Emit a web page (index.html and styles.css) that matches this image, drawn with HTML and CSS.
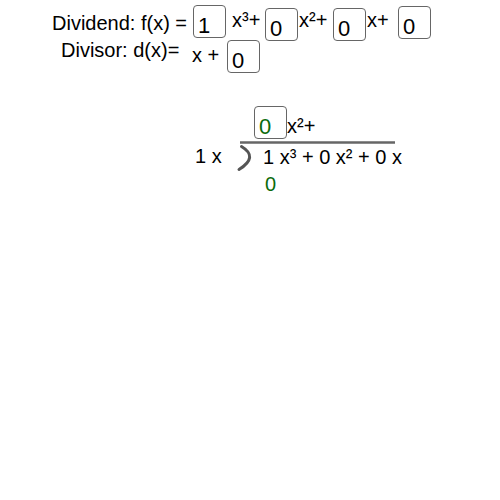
FILE: index.html
```html
<!DOCTYPE html>
<html lang="en">
  <head>
    <meta charset="UTF-8" />
    <meta name="viewport" content="width=device-width, initial-scale=1.0" />
    <title>Polynomial Division</title>
    <link rel="stylesheet" href="styles.css">
  </head>
  <body>
    <main class="applet">
      <!-- dividend row -->
      <span class="label dividend-label">Dividend: f(x) =</span>
      <input class="coef coef-a" type="text" value="1" aria-label="x cubed coefficient">
      <span class="label term-a">x³+</span>
      <input class="coef coef-b" type="text" value="0" aria-label="x squared coefficient">
      <span class="label term-b">x²+</span>
      <input class="coef coef-c" type="text" value="0" aria-label="x coefficient">
      <span class="label term-c">x+</span>
      <input class="coef coef-d" type="text" value="0" aria-label="constant">

      <!-- divisor row -->
      <span class="label divisor-label">Divisor: d(x)=</span>
      <span class="label divisor-x">x +</span>
      <input class="coef coef-r" type="text" value="0" aria-label="divisor constant">

      <!-- long division -->
      <input class="coef coef-q answer" type="text" value="0" aria-label="quotient x squared coefficient">
      <span class="label quot-term">x²+</span>
      <svg class="bracket" width="170" height="40" viewBox="230 135 170 40" aria-hidden="true">
        <line x1="240" y1="142.5" x2="395" y2="142.5" stroke="#666" stroke-width="2.5" />
        <path d="M241.5 146.5 Q259 157 239 169.5" fill="none" stroke="#555" stroke-width="3" stroke-linecap="round" />
      </svg>
      <span class="label divisor-term">1 x</span>
      <span class="label dividend-terms">1 x³ + 0 x² + 0 x</span>
      <span class="label answer product">0</span>
    </main>
  </body>
</html>
```

FILE: styles.css
```css
body {
  margin: 0;
  background: #fff;
}

.applet {
  position: relative;
  width: 500px;
  height: 500px;
  font-family: "Liberation Sans", Arial, sans-serif;
  font-size: 20px;
  line-height: 20px;
  color: #000;
}

/* top = baseline - 17 */
.label {
  position: absolute;
  white-space: nowrap;
}

.coef {
  position: absolute;
  box-sizing: border-box;
  width: 33px;
  height: 33px;
  margin: 0;
  padding: 8px 0 0 4px;
  border: 1.3px solid #666;
  border-radius: 4px;
  background: #fff;
  font-family: inherit;
  font-size: 22px;
  line-height: 22px;
  color: #000;
  outline: none;
}

.answer {
  color: #0b6b0b;
}

.dividend-label { left: 52px; top: 13px; }
.coef-a { left: 193px; top: 5px; }
.term-a { left: 232px; top: 10px; }
.coef-b { left: 265px; top: 8px; }
.term-b { left: 299px; top: 10px; }
.coef-c { left: 333px; top: 8px; }
.term-c { left: 367px; top: 10px; }
.coef-d { left: 398px; top: 6px; }

.divisor-label { left: 61px; top: 40px; }
.divisor-x { left: 192px; top: 45px; }
.coef-r { left: 227px; top: 40px; }

.coef-q { left: 254px; top: 106px; }
.quot-term { left: 287px; top: 116px; }

.bracket {
  position: absolute;
  left: 230px;
  top: 135px;
}

.divisor-term { left: 195px; top: 146px; }
.dividend-terms { left: 263px; top: 147px; }
.product { left: 265px; top: 174px; }
```
